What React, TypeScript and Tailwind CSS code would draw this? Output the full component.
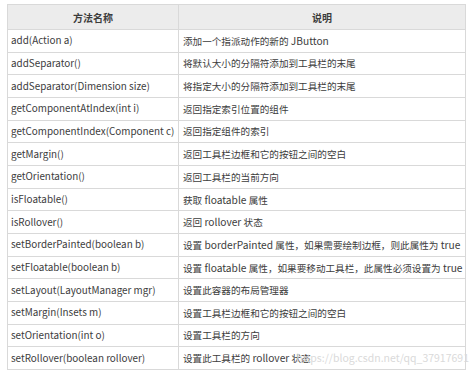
import React from "react";

const rows: [string, string][] = [
  ["add(Action a)", "添加一个指派动作的新的 JButton"],
  ["addSeparator()", "将默认大小的分隔符添加到工具栏的末尾"],
  ["addSeparator(Dimension size)", "将指定大小的分隔符添加到工具栏的末尾"],
  ["getComponentAtIndex(int i)", "返回指定索引位置的组件"],
  ["getComponentIndex(Component c)", "返回指定组件的索引"],
  ["getMargin()", "返回工具栏边框和它的按钮之间的空白"],
  ["getOrientation()", "返回工具栏的当前方向"],
  ["isFloatable()", "获取 floatable 属性"],
  ["isRollover()", "返回 rollover 状态"],
  ["setBorderPainted(boolean b)", "设置 borderPainted 属性，如果需要绘制边框，则此属性为 true"],
  ["setFloatable(boolean b)", "设置 floatable 属性，如果要移动工具栏，此属性必须设置为 true"],
  ["setLayout(LayoutManager mgr)", "设置此容器的布局管理器"],
  ["setMargin(Insets m)", "设置工具栏边框和它的按钮之间的空白"],
  ["setOrientation(int o)", "设置工具栏的方向"],
  ["setRollover(boolean rollover)", "设置此工具栏的 rollover 状态"],
];

// latin words are a bit larger than the cjk text in the screenshot
const Mixed = ({ text }: { text: string }) => (
  <>
    {text.split(/([A-Za-z ]+)/).map((part, i) =>
      /[A-Za-z]/.test(part) ? (
        <span key={i} className="text-[10.2px]">
          {part}
        </span>
      ) : (
        <span key={i}>{part}</span>
      )
    )}
  </>
);

export default function App() {
  return (
    <div
      className="w-[474px] h-[376px] bg-white pt-[4px] pl-[7px] text-[#3c3c3c]"
      style={{ fontFamily: '"Noto Sans CJK SC", sans-serif' }}
    >
      <div className="relative w-[459px]">
        <table className="w-full table-fixed border-collapse">
          <thead>
            <tr className="h-[25px] bg-[#ececec]">
              <th className="w-[171px] border border-[#d9d9d9] text-[10px] font-bold text-center">
                方法名称
              </th>
              <th className="border border-[#d9d9d9] text-[10px] font-bold text-center">
                说明
              </th>
            </tr>
          </thead>
          <tbody>
            {rows.map(([method, desc]) => (
              <tr key={method} className="h-[22.67px]">
                <td className="border border-[#d9d9d9] pl-[3px] text-[9.9px] whitespace-nowrap">
                  {method}
                </td>
                <td className="border border-[#d9d9d9] pl-[4px] text-[9.6px] whitespace-nowrap">
                  <Mixed text={desc} />
                </td>
              </tr>
            ))}
          </tbody>
        </table>
        <div className="absolute right-[-3px] bottom-[4px] text-[10.5px] text-[#dadada] whitespace-nowrap">
          https://blog.csdn.net/qq_37917691
        </div>
      </div>
    </div>
  );
}
